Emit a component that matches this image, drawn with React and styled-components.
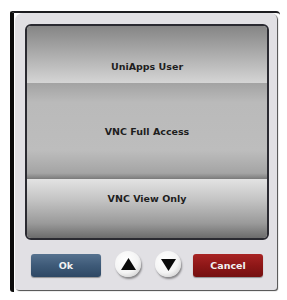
// App.jsx
import { styled, createGlobalStyle } from "styled-components";

const Global = createGlobalStyle`
  body {
    margin: 0;
    background: #ffffff;
    font-family: "DejaVu Sans", "Liberation Sans", sans-serif;
  }
`

const Page = styled.div`
  width: 287px;
  height: 300px;
  padding: 11px 0 0 10px;
  box-sizing: border-box;
`

const Frame = styled.div`
  width: 270px;
  height: 281px;
  border-left: 4px solid #0c0c0c;
  border-top: 2px solid #1c1c20;
  box-sizing: border-box;
  border-radius: 2px 4px 0 3px;
`

const Panel = styled.div`
  width: 262px;
  height: 277px;
  margin-left: 1px;
  box-sizing: border-box;
  padding: 11px 8px 0 10px;
  background: #e1e0e4;
  border-radius: 8px 6px 3px 4px;
  box-shadow: 1px 1px 1px #4a4a4a;
  display: flex;
  flex-direction: column;
`

const List = styled.div`
  height: 216px;
  border: 2px solid #2a2a31;
  border-radius: 6px;
  overflow: hidden;
  display: flex;
  flex-direction: column;
  box-sizing: border-box;
`

const Row = styled.div`
  height: ${p => p.$h}px;
  display: flex;
  justify-content: center;
  align-items: ${p => p.$align};
  padding: ${p => p.$pad};
  box-sizing: border-box;
  background: ${p => p.$bg};
  font-size: 9.5px;
  font-weight: bold;
  color: #1e1e1e;
`

const Bar = styled.div`
  display: flex;
  align-items: center;
  margin-top: 14px;
  padding-left: 6px;
`

const Btn = styled.div`
  width: 70px;
  height: 23px;
  border-radius: 3px;
  display: flex;
  justify-content: center;
  align-items: center;
  font-size: 9.5px;
  font-weight: bold;
  color: #f2f2f2;
  background: ${p => p.$bg};
  box-shadow: 0 1px 1px rgba(0,0,0,0.35);
  margin-right: ${p => p.$mr}px;
`

const Round = styled.div`
  width: 26px;
  height: 26px;
  border-radius: 50%;
  background: radial-gradient(circle at 40% 35%, #ffffff 0%, #f4f4f4 55%, #bdbdbd 100%);
  box-shadow: 1px 2px 2px rgba(0,0,0,0.4);
  display: flex;
  justify-content: center;
  align-items: center;
  margin-top: -3px;
  margin-right: ${p => p.$mr}px;
`

const Arrow = ({ down }) => (
  <svg width="17" height="15" viewBox="0 0 17 15">
    {down
      ? <polygon points="1,2 16,2 8.5,14" fill="#0a0a0a" />
      : <polygon points="8.5,1 16,13 1,13" fill="#0a0a0a" />}
  </svg>
)

const App = () => {
  return (
    <Page>
      <Global />
      <Frame>
        <Panel>
          <List>
            <Row $h={57} $align="flex-end" $pad="0 0 11px"
              $bg="linear-gradient(180deg, #858585 0%, #a9a9a9 45%, #d5d5d5 100%)">
              UniApps User
            </Row>
            <Row $h={96} $align="center" $pad="0"
              $bg="linear-gradient(180deg, #a3a3a3 0%, #bababa 20%, #bdbdbd 70%, #a4a4a4 94%, #7a7a7a 100%)">
              VNC Full Access
            </Row>
            <Row $h={59} $align="flex-start" $pad="14px 0 0"
              $bg="linear-gradient(180deg, #e3e3e3 0%, #c4c4c4 35%, #9a9a9a 75%, #6c6c6c 100%)">
              VNC View Only
            </Row>
          </List>
          <Bar>
            <Btn $mr={14} $bg="linear-gradient(180deg, #56728f 0%, #3e5a78 50%, #2e4864 100%)">Ok</Btn>
            <Round $mr={14}><Arrow /></Round>
            <Round $mr={12}><Arrow down /></Round>
            <Btn $mr={0} $bg="linear-gradient(180deg, #a82424 0%, #8e1717 50%, #741010 100%)">Cancel</Btn>
          </Bar>
        </Panel>
      </Frame>
    </Page>
  )
}

export default App;
